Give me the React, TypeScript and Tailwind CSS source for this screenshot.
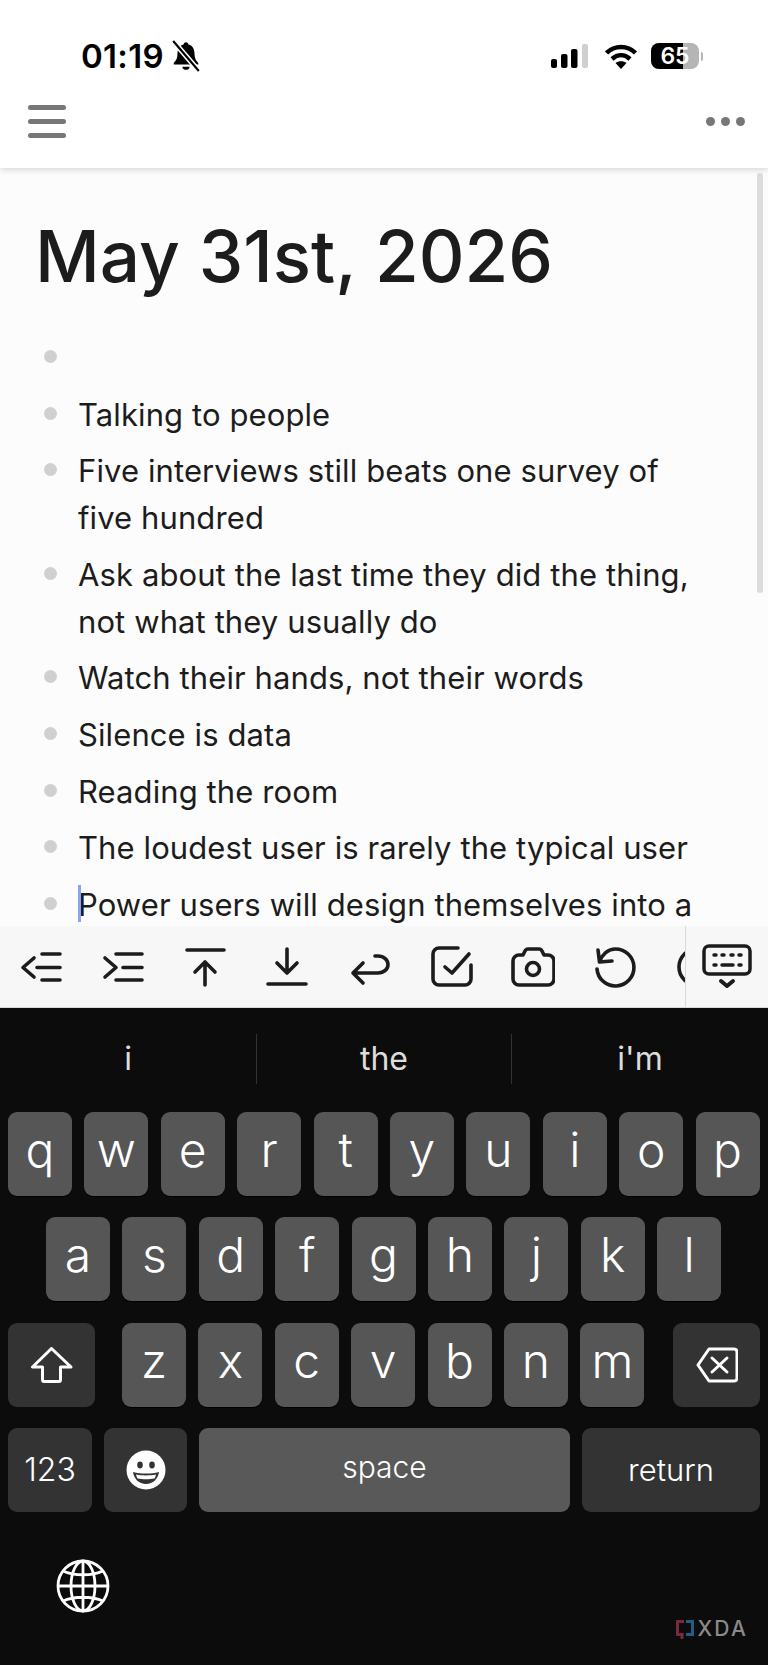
import React from 'react';

const sans = "font-['Inter','Liberation_Sans',sans-serif]";

const row1 = ['q', 'w', 'e', 'r', 't', 'y', 'u', 'i', 'o', 'p'];
const row2 = ['a', 's', 'd', 'f', 'g', 'h', 'j', 'k', 'l'];
const row3 = ['z', 'x', 'c', 'v', 'b', 'n', 'm'];

const Key = ({ label }: { label: string }) => (
  <div className="flex h-[84px] w-[64px] shrink-0 items-center justify-center rounded-[9px] bg-[#565656] pb-[8px] text-[48px] font-light text-white shadow-[0_1px_0_#000]">
    {label}
  </div>
);

const Icon = ({ children, size = 44 }: { children: React.ReactNode; size?: number }) => (
  <svg width={size} height={size} viewBox="0 0 44 44" fill="none" stroke="#1c1c1c" strokeWidth="3.6" strokeLinecap="round" strokeLinejoin="round" className="shrink-0">
    {children}
  </svg>
);

const Toolbar = () => (
  <div className="flex h-[82px] overflow-hidden border-b border-[#d8d8d8] bg-[#f7f7f7]">
    <div className="flex flex-1 items-center gap-[38px] overflow-hidden pl-[19px]">
      <Icon><path d="M15 13 4 22.500 15 32M23 9h18M18 22.500h23M23 35h18" /></Icon>
      <Icon><path d="M4 13l11 9.500L4 32M15 9h26M22 22.500h19M15 35h26" /></Icon>
      <Icon><path d="M4 5h37M22 40V18M12 27l10-10 10 10" /></Icon>
      <Icon><path d="M3 39h38M22 4v24M12 18l10 10 10-10" /></Icon>
      <Icon><path d="M16 18 6 28l10 10M6 28h25c6 0 10-4 10-8.500S37 11 31 11h-3" /></Icon>
      <Icon><path d="M29 3H10a6 6 0 0 0-6 6v25a6 6 0 0 0 6 6h26a6 6 0 0 0 6-6V20M16 22l7 6 17-19" /></Icon>
      <Icon>
        <path d="M12 10l2-4c.5-1 1-2 3-2h11c2 0 2.500 1 3 2l2 4h4a6 6 0 0 1 6 6v18a6 6 0 0 1-6 6H8a6 6 0 0 1-6-6V16a6 6 0 0 1 6-6z" />
        <circle cx="22" cy="24" r="6.500" />
      </Icon>
      <Icon><path d="M5 5l1.500 12L19 16M6.500 17C9 9.500 15 4 22.500 4a18.500 18.500 0 1 1-18.500 20" /></Icon>
      <Icon><circle cx="22" cy="22" r="18" /></Icon>
    </div>
    <div className="flex w-[83px] shrink-0 items-center justify-center border-l border-[#d8d8d8] bg-[#f7f7f7]">
      <svg width="50" height="48" viewBox="0 0 50 48" fill="none">
        <rect x="2" y="3" width="46" height="28" rx="5" stroke="#1c1c1c" strokeWidth="3.5" />
        <path d="M12 12h2M20 12h2M29 12h2M37 12h2M12 22h2M37 22h2" stroke="#1c1c1c" strokeWidth="3.5" strokeLinecap="round" />
        <path d="M20 22h11" stroke="#1c1c1c" strokeWidth="3.5" strokeLinecap="round" />
        <path d="M19 38l6 5 6-5" stroke="#1c1c1c" strokeWidth="4" strokeLinecap="round" strokeLinejoin="round" />
      </svg>
    </div>
  </div>
);

const Bullet = ({ text, caret }: { text?: string; caret?: boolean }) => (
  <div className="flex">
    <div className="flex h-[47px] w-[78px] shrink-0 items-center pl-[44px]">
      <span className="block h-[13px] w-[13px] rounded-full bg-[#d0d0d0]" />
    </div>
    <div className="relative min-h-[48px] w-[626px] pt-[1px] text-[31px] leading-[47px] tracking-[0.1px] text-[#1c1c1c]">
      {caret && <span className="absolute left-0 top-[5px] h-[37px] w-[3px] bg-[#8aa6ee]" />}
      {text}
    </div>
  </div>
);

export default function App() {
  return (
    <div className={`flex h-[1665px] w-[768px] flex-col overflow-hidden bg-[#0c0c0c] ${sans}`}>
      {/* Status bar + header */}
      <header className="relative z-10 h-[168px] shrink-0 bg-white shadow-[0_2px_6px_rgba(0,0,0,0.15)]">
        <div className="flex h-[106px] items-center pl-[81px] pr-[65px] pt-[6px]">
          <div className="flex items-center gap-[6px]">
            <span className="text-[33px] font-semibold leading-none tracking-[0.3px] text-black">01:19</span>
            <svg width="32" height="32" viewBox="0 0 30 30">
              <path d="M15 2c1.500 0 2 1 2.300 2.200C21.500 5.300 23 9 23 13c0 4 1 6 3.500 8.500V23H3.500v-1.500C6 19 7 17 7 13c0-4 1.500-7.700 5.700-8.800C13 3 13.500 2 15 2zM11.500 25h7c-.5 2-1.800 3-3.500 3s-3-1-3.500-3z" fill="#000" />
              <path d="M3 1l24 28" stroke="#fff" strokeWidth="5" />
              <path d="M3 1l24 28" stroke="#000" strokeWidth="2" />
            </svg>
          </div>
          <div className="ml-auto flex items-center">
            <svg width="37" height="24" viewBox="0 0 37 24" className="mr-[17px]">
              <rect x="0" y="15" width="6" height="9" rx="2" fill="#000" />
              <rect x="10" y="10" width="6.500" height="14" rx="2" fill="#000" />
              <rect x="20" y="5" width="6.500" height="19" rx="2" fill="#000" />
              <rect x="31" y="0" width="6" height="24" rx="2" fill="#cfcfcf" />
            </svg>
            <svg width="32" height="25" viewBox="0 0 32 25" className="mr-[14px]" fill="none" stroke="#000" strokeWidth="4.500">
              <path d="M1.500 9c8-8 21-8 29 0M7 15c5.500-5 12.500-5 18 0" />
              <path d="M10.500 19c3-2.500 8-2.500 11 0L16 25z" fill="#000" stroke="none" />
            </svg>
            <div className="relative flex h-[26px] w-[48px] items-center justify-center rounded-[8px] bg-[#b5b5b5]">
              <span className="absolute inset-y-0 left-0 w-[32px] rounded-l-[8px] bg-black" />
              <span className="relative text-[23px] font-semibold leading-[26px] text-white">65</span>
            </div>
            <span className="ml-[2px] h-[9px] w-[2px] rounded-r-full bg-[#b5b5b5]" />
          </div>
        </div>
        <div className="flex h-[30px] items-center justify-between pl-[28px] pr-[23px]">
          <div className="flex w-[38px] flex-col gap-[9px]">
            <span className="h-[5px] rounded-full bg-[#777777]" />
            <span className="h-[5px] rounded-full bg-[#777777]" />
            <span className="h-[5px] rounded-full bg-[#777777]" />
          </div>
          <div className="flex gap-[6px]">
            <span className="h-[9px] w-[9px] rounded-full bg-[#777777]" />
            <span className="h-[9px] w-[9px] rounded-full bg-[#777777]" />
            <span className="h-[9px] w-[9px] rounded-full bg-[#777777]" />
          </div>
        </div>
      </header>

      {/* Note */}
      <main className="relative h-[758px] shrink-0 overflow-hidden bg-[#fcfcfc]">
        <div className="absolute right-[5px] top-[5px] h-[420px] w-[6px] rounded-full bg-[#dcdcdc]" />
        <h1 className="pl-[35px] pt-[44px] text-[71px] font-medium leading-[88px] text-[#1c1c1c]">May 31st, 2026</h1>
        <div className="mt-[33px] flex flex-col gap-[8.600px]">
          <Bullet />
          <Bullet text="Talking to people" />
          <Bullet text="Five interviews still beats one survey of five hundred" />
          <Bullet text="Ask about the last time they did the thing, not what they usually do" />
          <Bullet text="Watch their hands, not their words" />
          <Bullet text="Silence is data" />
          <Bullet text="Reading the room" />
          <Bullet text="The loudest user is rarely the typical user" />
          <Bullet caret text="Power users will design themselves into a" />
        </div>
      </main>

      <Toolbar />

      {/* Keyboard */}
      <section className="relative flex-1 bg-[#0c0c0c]">
        <div className="grid h-[104px] grid-cols-3 items-center pb-[3px] text-center text-[32px] font-normal text-[#dddddd]">
          <div className="flex h-[50px] items-center justify-center">i</div>
          <div className="flex h-[50px] items-center justify-center border-x border-[#333333]">the</div>
          <div className="flex h-[50px] items-center justify-center">i'm</div>
        </div>
        <div className="flex flex-col gap-[21.300px]">
          <div className="flex gap-[12.400px] pl-[8px]">
            {row1.map((k) => <Key key={k} label={k} />)}
          </div>
          <div className="flex gap-[12.400px] pl-[46px]">
            {row2.map((k) => <Key key={k} label={k} />)}
          </div>
          <div className="flex items-stretch px-[8px]">
            <div className="flex h-[84px] w-[87px] items-center justify-center rounded-[9px] bg-[#333333]">
              <svg width="42" height="36" viewBox="0 0 42 36" fill="none" stroke="#fff" strokeWidth="3" strokeLinejoin="round">
                <path d="M20.500 1.500 1.500 20h10v12.500c0 1 .5 2 1.500 2h15c1 0 1.500-1 1.500-2V20h10.500z" />
              </svg>
            </div>
            <div className="ml-[27px] flex gap-[12.400px]">
              {row3.map((k) => <Key key={k} label={k} />)}
            </div>
            <div className="ml-auto flex h-[84px] w-[87px] items-center justify-center rounded-[9px] bg-[#333333]">
              <svg width="42" height="36" viewBox="0 0 42 36" fill="none" stroke="#fff" strokeWidth="3" strokeLinejoin="round" strokeLinecap="round">
                <path d="M13 2h25c2 0 3 1 3 3v26c0 2-1 3-3 3H13L2 18z" />
                <path d="M16 11l15 14M31 11 16 25" />
              </svg>
            </div>
          </div>
          <div className="flex gap-[12px] px-[8px]">
            <div className="flex h-[84px] w-[84px] items-center justify-center rounded-[9px] bg-[#333333] text-[32px] font-light text-white">123</div>
            <div className="flex h-[84px] w-[83px] items-center justify-center rounded-[9px] bg-[#333333]">
              <svg width="40" height="40" viewBox="0 0 40 40">
                <circle cx="20" cy="20" r="19.500" fill="#fff" />
                <ellipse cx="14" cy="15" rx="2.800" ry="3.400" fill="#333" />
                <ellipse cx="26" cy="15" rx="2.800" ry="3.400" fill="#333" />
                <path d="M7 22c8 2 18 2 26 0-1 7-6 12-13 12S8 29 7 22z" fill="#333" />
                <path d="M10 24.500c6 1.200 14 1.200 20 0-.5 2-1 3-1.500 4-5 1-12 1-17 0-.5-1-1-2-1.500-4z" fill="#fff" />
              </svg>
            </div>
            <div className="flex h-[84px] flex-1 items-center justify-center rounded-[9px] bg-[#595959] pb-[4px] text-[30px] font-light text-white">space</div>
            <div className="flex h-[84px] w-[178px] items-center justify-center rounded-[9px] bg-[#333333] text-[31px] font-light text-white">return</div>
          </div>
        </div>
        <div className="pl-[56px] pt-[47px]">
          <svg width="54" height="54" viewBox="0 0 54 54" fill="none" stroke="#fff" strokeWidth="2.800">
            <circle cx="27" cy="27" r="25" />
            <ellipse cx="27" cy="27" rx="12" ry="25" />
            <path d="M27 2v50M2 27h50M7 12c11 5 29 5 40 0M7 42c11-5 29-5 40 0" />
          </svg>
        </div>
        <div className="absolute bottom-[25px] right-[20px] flex items-center gap-[3px] text-[21px] font-medium leading-none tracking-[2.200px] text-[#8a8a8a]">
          <svg width="18" height="20" viewBox="0 0 18 20" fill="none" strokeWidth="3" className="mt-[4px]">
            <path d="M8 1.500H1.500v13H6V19" stroke="#7a2a40" />
            <path d="M10 1.500h6.500v13H10" stroke="#1f5d84" />
          </svg>
          XDA
        </div>
      </section>
    </div>
  );
}
